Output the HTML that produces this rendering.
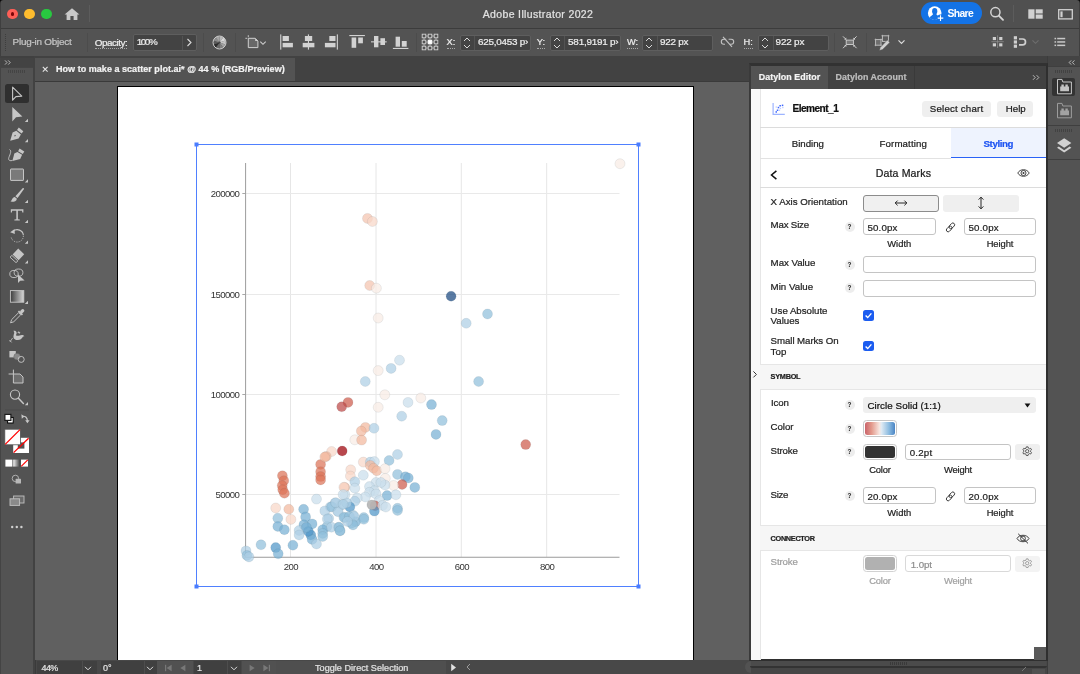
<!DOCTYPE html>
<html>
<head>
<meta charset="utf-8">
<title>Adobe Illustrator 2022</title>
<style>
*{box-sizing:border-box;margin:0;padding:0}
html,body{width:1080px;height:674px;overflow:hidden;background:#606060;font-family:"Liberation Sans",sans-serif;}
.abs{position:absolute}
#app{will-change:transform;position:relative;width:1080px;height:674px;overflow:hidden;background:#606060}
.t{position:absolute;white-space:nowrap;line-height:1;-webkit-text-stroke:0.22px currentColor}
/* title bar */
#titlebar{left:0;top:0;width:1080px;height:28px;background:#505050}
#ctrlbar{left:0;top:28px;width:1080px;height:28px;background:#535353;border-top:1px solid #3c3c3c}
.ui{color:#dcdcdc;font-size:10px}
.field{position:absolute;background:#434343;border:1px solid #5e5e5e;border-radius:2px;height:17px;top:34px}
/* left toolbar */
#toolbar{left:0;top:56px;width:35px;height:618px;background:#535353;border-right:2px solid #424242}
/* tabbar */
#tabbar{left:35px;top:56px;width:1045px;height:26px;background:#424242}
#doctab{left:35px;top:58px;width:260px;height:23px;background:#535353}
/* canvas */
#canvas{left:35px;top:82px;width:1013px;height:578px;background:#606060}
#artboard{left:117px;top:86px;width:577px;height:580px;background:#fff;border:1px solid #000}
#statusbar{left:35px;top:660px;width:1045px;height:14px;background:#484848}
/* right dock */
#dock{left:1047px;top:56px;width:33px;height:618px;background:#535353;border-left:1px solid #3c3c3c}
/* panel */
#panel{left:749px;top:63px;width:299px;height:598px;background:#fff;border:2px solid #2f2f2f;border-top:3px solid #323232;border-left-color:#3a3a3a}
.pl{position:absolute;white-space:nowrap;line-height:1;color:#222;font-size:10.5px}
.inp{position:absolute;background:#fff;border:1px solid #c4c4c4;border-radius:3px;height:16px}
.inp span{position:absolute;left:4px;top:2px;font-size:10.5px;color:#222;line-height:1}
.q{position:absolute;width:10px;height:10px;border-radius:50%;background:#ededed;color:#222;font-size:6.5px;font-weight:bold;text-align:center;line-height:10px}
.sub{position:absolute;white-space:nowrap;line-height:1;color:#222;font-size:10px;transform:translateX(-50%)}
.cb{width:10.6px;height:10.6px;border-radius:2.5px;background:#1b5cf0}
</style>
</head>
<body>
<div id="app">
<div id="canvas" class="abs"></div>
<div id="artboard" class="abs"></div>
<svg class="abs" style="left:190px;top:140px" width="460" height="455" viewBox="190 140 460 455">
<g stroke="#e9e9e9" stroke-width="1">
<line x1="290.5" y1="163" x2="290.5" y2="557" stroke="#e6e6e6"/>
<line x1="376.0" y1="163" x2="376.0" y2="557" stroke="#e6e6e6"/>
<line x1="461.3" y1="163" x2="461.3" y2="557" stroke="#e6e6e6"/>
<line x1="546.7" y1="163" x2="546.7" y2="557" stroke="#e6e6e6"/>
<line x1="246" y1="193.5" x2="619.5" y2="193.5" />
<line x1="246" y1="294.5" x2="619.5" y2="294.5" />
<line x1="246" y1="394.5" x2="619.5" y2="394.5" />
<line x1="246" y1="494.5" x2="619.5" y2="494.5" />
</g>
<g stroke="#a8a8a8" stroke-width="1">
<line x1="242.3" y1="193.5" x2="245.5" y2="193.5" />
<line x1="242.3" y1="294.5" x2="245.5" y2="294.5" />
<line x1="242.3" y1="394.5" x2="245.5" y2="394.5" />
<line x1="242.3" y1="494.5" x2="245.5" y2="494.5" />
<line x1="245.6" y1="163" x2="245.6" y2="557.5" stroke="#9c9c9c"/><line x1="245" y1="557.25" x2="619.5" y2="557.25" stroke="#9a9a9a"/>
</g>
<g font-family="Liberation Sans, sans-serif" font-size="9.6" fill="#333" letter-spacing="-0.57">
<text x="239.4" y="196.8" text-anchor="end">200000</text>
<text x="239.4" y="297.8" text-anchor="end">150000</text>
<text x="239.4" y="397.8" text-anchor="end">100000</text>
<text x="239.4" y="497.8" text-anchor="end">50000</text>
<text x="291.0" y="570.1" text-anchor="middle">200</text>
<text x="376.5" y="570.1" text-anchor="middle">400</text>
<text x="461.8" y="570.1" text-anchor="middle">600</text>
<text x="547.2" y="570.1" text-anchor="middle">800</text>
</g>
<g transform="translate(0.4,0.4)" stroke="#3a4a5a" stroke-opacity="0.18" stroke-width="0.5" fill-opacity="0.72">
<circle cx="619.6" cy="163.3" r="5" fill="#f8ece5"/>
<circle cx="367.1" cy="218.0" r="5" fill="#f4c3ae"/>
<circle cx="372.0" cy="221.1" r="5" fill="#f8d7c7"/>
<circle cx="369.3" cy="285.1" r="5" fill="#f4c3ae"/>
<circle cx="376.0" cy="287.8" r="5" fill="#f8ece5"/>
<circle cx="377.8" cy="317.6" r="5" fill="#f8ece5"/>
<circle cx="450.7" cy="295.8" r="5" fill="#1b487f"/>
<circle cx="465.8" cy="322.9" r="5" fill="#adcee5"/>
<circle cx="487.1" cy="313.6" r="5" fill="#90bfdb"/>
<circle cx="399.1" cy="359.8" r="5" fill="#c9deec"/>
<circle cx="390.7" cy="368.0" r="5" fill="#adcee5"/>
<circle cx="377.8" cy="370.2" r="5" fill="#f8ece5"/>
<circle cx="364.9" cy="381.1" r="5" fill="#adcee5"/>
<circle cx="478.2" cy="381.1" r="5" fill="#90bfdb"/>
<circle cx="384.4" cy="394.4" r="5" fill="#f8ece5"/>
<circle cx="420.4" cy="397.6" r="5" fill="#f8ece5"/>
<circle cx="407.6" cy="402.0" r="5" fill="#c9deec"/>
<circle cx="431.1" cy="404.2" r="5" fill="#77b0d4"/>
<circle cx="347.6" cy="402.0" r="5" fill="#cd5c4c"/>
<circle cx="341.3" cy="406.4" r="5" fill="#bc4846"/>
<circle cx="377.8" cy="406.9" r="5" fill="#f8ece5"/>
<circle cx="401.3" cy="415.8" r="5" fill="#adcee5"/>
<circle cx="441.8" cy="420.2" r="5" fill="#90bfdb"/>
<circle cx="435.6" cy="434.0" r="5" fill="#77b0d4"/>
<circle cx="525.3" cy="444.2" r="5" fill="#cd5c4c"/>
<circle cx="365.0" cy="427.0" r="5" fill="#f2b89e"/>
<circle cx="373.6" cy="427.9" r="5" fill="#adcee5"/>
<circle cx="360.9" cy="430.7" r="5" fill="#f2b89e"/>
<circle cx="354.4" cy="439.4" r="5" fill="#f8ece5"/>
<circle cx="361.2" cy="439.7" r="5" fill="#f2b89e"/>
<circle cx="341.8" cy="450.6" r="5" fill="#9c0009"/>
<circle cx="331.2" cy="451.1" r="5" fill="#f8d7c7"/>
<circle cx="325.8" cy="456.0" r="5" fill="#f2b89e"/>
<circle cx="397.1" cy="454.1" r="5" fill="#adcee5"/>
<circle cx="388.7" cy="460.1" r="5" fill="#90bfdb"/>
<circle cx="362.9" cy="461.7" r="5" fill="#f8d7c7"/>
<circle cx="369.9" cy="461.7" r="5" fill="#adcee5"/>
<circle cx="374.0" cy="461.2" r="5" fill="#c9deec"/>
<circle cx="369.9" cy="465.0" r="5" fill="#f2b89e"/>
<circle cx="373.1" cy="467.8" r="5" fill="#f2b89e"/>
<circle cx="376.4" cy="470.4" r="5" fill="#f2b89e"/>
<circle cx="384.6" cy="468.3" r="5" fill="#f8ece5"/>
<circle cx="350.3" cy="469.4" r="5" fill="#f8d7c7"/>
<circle cx="350.0" cy="475.6" r="5" fill="#f8d7c7"/>
<circle cx="362.9" cy="474.8" r="5" fill="#c9deec"/>
<circle cx="397.1" cy="474.0" r="5" fill="#90bfdb"/>
<circle cx="405.0" cy="476.4" r="5" fill="#77b0d4"/>
<circle cx="407.9" cy="477.6" r="5" fill="#77b0d4"/>
<circle cx="414.4" cy="487.0" r="5" fill="#77b0d4"/>
<circle cx="401.7" cy="484.1" r="5" fill="#cd5c4c"/>
<circle cx="393.2" cy="485.1" r="5" fill="#f8ece5"/>
<circle cx="384.9" cy="478.0" r="5" fill="#f8ece5"/>
<circle cx="384.6" cy="484.6" r="5" fill="#c9deec"/>
<circle cx="344.3" cy="487.0" r="5" fill="#f2b89e"/>
<circle cx="354.4" cy="481.3" r="5" fill="#adcee5"/>
<circle cx="354.4" cy="487.8" r="5" fill="#c9deec"/>
<circle cx="344.6" cy="494.4" r="5" fill="#c9deec"/>
<circle cx="375.6" cy="482.1" r="5" fill="#c9deec"/>
<circle cx="380.5" cy="482.1" r="5" fill="#c9deec"/>
<circle cx="369.1" cy="486.2" r="5" fill="#c9deec"/>
<circle cx="374.0" cy="490.3" r="5" fill="#c9deec"/>
<circle cx="369.1" cy="491.9" r="5" fill="#c9deec"/>
<circle cx="375.6" cy="493.5" r="5" fill="#c9deec"/>
<circle cx="365.0" cy="496.5" r="5" fill="#c9deec"/>
<circle cx="386.7" cy="495.2" r="5" fill="#77b0d4"/>
<circle cx="395.5" cy="494.4" r="5" fill="#c9deec"/>
<circle cx="378.9" cy="500.1" r="5" fill="#c9deec"/>
<circle cx="356.8" cy="497.6" r="5" fill="#c9deec"/>
<circle cx="354.4" cy="500.9" r="5" fill="#adcee5"/>
<circle cx="374.6" cy="505.4" r="5" fill="#cd5c4c"/>
<circle cx="374.0" cy="510.7" r="5" fill="#4f95c7"/>
<circle cx="382.1" cy="505.0" r="5" fill="#c9deec"/>
<circle cx="385.4" cy="506.6" r="5" fill="#c9deec"/>
<circle cx="397.1" cy="507.9" r="5" fill="#90bfdb"/>
<circle cx="397.1" cy="510.0" r="5" fill="#90bfdb"/>
<circle cx="349.5" cy="506.6" r="5" fill="#4f95c7"/>
<circle cx="334.8" cy="502.5" r="5" fill="#adcee5"/>
<circle cx="341.3" cy="504.2" r="5" fill="#adcee5"/>
<circle cx="329.9" cy="506.6" r="5" fill="#adcee5"/>
<circle cx="346.2" cy="502.5" r="5" fill="#adcee5"/>
<circle cx="337.2" cy="510.7" r="5" fill="#c9deec"/>
<circle cx="344.6" cy="517.2" r="5" fill="#90bfdb"/>
<circle cx="352.7" cy="514.8" r="5" fill="#adcee5"/>
<circle cx="363.4" cy="517.2" r="5" fill="#90bfdb"/>
<circle cx="355.2" cy="521.3" r="5" fill="#77b0d4"/>
<circle cx="351.1" cy="522.9" r="5" fill="#90bfdb"/>
<circle cx="338.1" cy="527.0" r="5" fill="#90bfdb"/>
<circle cx="328.3" cy="518.0" r="5" fill="#adcee5"/>
<circle cx="326.6" cy="526.2" r="5" fill="#90bfdb"/>
<circle cx="339.7" cy="530.3" r="5" fill="#90bfdb"/>
<circle cx="320.2" cy="464.0" r="5" fill="#dc7357"/>
<circle cx="320.2" cy="471.3" r="5" fill="#dc7357"/>
<circle cx="320.2" cy="476.2" r="5" fill="#dc7357"/>
<circle cx="320.2" cy="479.5" r="5" fill="#dc7357"/>
<circle cx="324.4" cy="456.6" r="5" fill="#f2b89e"/>
<circle cx="343.5" cy="486.8" r="5" fill="#f8d7c7"/>
<circle cx="282.0" cy="475.4" r="5" fill="#dc7357"/>
<circle cx="283.4" cy="480.3" r="5" fill="#dc7357"/>
<circle cx="281.8" cy="485.2" r="5" fill="#dc7357"/>
<circle cx="282.3" cy="489.3" r="5" fill="#dc7357"/>
<circle cx="284.0" cy="492.9" r="5" fill="#dc7357"/>
<circle cx="245.6" cy="550.5" r="5" fill="#adcee5"/>
<circle cx="246.5" cy="555.0" r="5" fill="#90bfdb"/>
<circle cx="248.5" cy="556.5" r="5" fill="#adcee5"/>
<circle cx="260.6" cy="544.4" r="5" fill="#90bfdb"/>
<circle cx="275.3" cy="547.2" r="5" fill="#4f95c7"/>
<circle cx="277.8" cy="553.4" r="5" fill="#77b0d4"/>
<circle cx="292.5" cy="544.8" r="5" fill="#77b0d4"/>
<circle cx="277.4" cy="517.8" r="5" fill="#90bfdb"/>
<circle cx="277.4" cy="526.0" r="5" fill="#77b0d4"/>
<circle cx="284.0" cy="529.3" r="5" fill="#77b0d4"/>
<circle cx="275.3" cy="507.6" r="5" fill="#f8d7c7"/>
<circle cx="288.4" cy="508.9" r="5" fill="#f2b89e"/>
<circle cx="290.5" cy="519.0" r="5" fill="#f8d7c7"/>
<circle cx="303.2" cy="508.9" r="5" fill="#77b0d4"/>
<circle cx="305.2" cy="516.5" r="5" fill="#77b0d4"/>
<circle cx="303.5" cy="524.4" r="5" fill="#77b0d4"/>
<circle cx="311.7" cy="523.5" r="5" fill="#77b0d4"/>
<circle cx="298.7" cy="530.1" r="5" fill="#adcee5"/>
<circle cx="298.7" cy="534.6" r="5" fill="#adcee5"/>
<circle cx="310.4" cy="534.6" r="5" fill="#4f95c7"/>
<circle cx="311.7" cy="539.0" r="5" fill="#77b0d4"/>
<circle cx="316.1" cy="543.6" r="5" fill="#adcee5"/>
<circle cx="322.3" cy="529.3" r="5" fill="#77b0d4"/>
<circle cx="322.3" cy="533.0" r="5" fill="#90bfdb"/>
<circle cx="322.3" cy="536.1" r="5" fill="#90bfdb"/>
<circle cx="316.1" cy="498.7" r="5" fill="#c9deec"/>
<circle cx="324.4" cy="510.5" r="5" fill="#adcee5"/>
<circle cx="326.9" cy="518.7" r="5" fill="#adcee5"/>
<circle cx="331.3" cy="506.4" r="5" fill="#90bfdb"/>
<circle cx="331.0" cy="526.8" r="5" fill="#adcee5"/>
<circle cx="337.8" cy="511.3" r="5" fill="#adcee5"/>
<circle cx="338.6" cy="526.8" r="5" fill="#90bfdb"/>
<circle cx="339.5" cy="530.4" r="5" fill="#90bfdb"/>
<circle cx="335.4" cy="502.3" r="5" fill="#adcee5"/>
<circle cx="342.7" cy="504.0" r="5" fill="#adcee5"/>
<circle cx="342.7" cy="494.2" r="5" fill="#c9deec"/>
<circle cx="343.5" cy="517.0" r="5" fill="#90bfdb"/>
<circle cx="308.0" cy="531.0" r="5" fill="#4f95c7"/>
<circle cx="306.0" cy="527.0" r="5" fill="#77b0d4"/>
<circle cx="349.0" cy="516.1" r="5" fill="#90bfdb"/>
<circle cx="353.8" cy="516.1" r="5" fill="#adcee5"/>
<circle cx="352.6" cy="524.5" r="5" fill="#90bfdb"/>
<circle cx="363.4" cy="518.9" r="5" fill="#90bfdb"/>
<circle cx="347.0" cy="521.0" r="5" fill="#adcee5"/>
<circle cx="371.4" cy="504.4" r="4.9" fill="#b6b6b6" fill-opacity="0.93"/>
</g>
<rect x="196.5" y="144.5" width="442" height="442" fill="none" stroke="#4f80ff" stroke-width="1"/>
<rect x="194.5" y="142.5" width="4" height="4" fill="#4a7dff"/>
<rect x="636.5" y="142.5" width="4" height="4" fill="#4a7dff"/>
<rect x="194.5" y="584.5" width="4" height="4" fill="#4a7dff"/>
<rect x="636.5" y="584.5" width="4" height="4" fill="#4a7dff"/>
</svg>

<div id="titlebar" class="abs"></div>
<div id="ctrlbar" class="abs"></div>
<!-- traffic lights -->
<div class="abs" style="left:7.3px;top:8.7px;width:10.6px;height:10.6px;border-radius:50%;background:#fe5f57"></div>
<div class="abs" style="left:10.7px;top:12.1px;width:3.8px;height:3.8px;border-radius:50%;background:#7e0508"></div>
<div class="abs" style="left:24.3px;top:8.7px;width:10.6px;height:10.6px;border-radius:50%;background:#febc2e"></div>
<div class="abs" style="left:41px;top:8.7px;width:10.6px;height:10.6px;border-radius:50%;background:#28c840"></div>
<svg class="abs" style="left:64px;top:8px" width="16" height="13" viewBox="0 0 16 13"><path d="M8 0.3 L15.4 6.6 L13.4 6.6 L13.4 12 L9.6 12 L9.6 8 L6.4 8 L6.4 12 L2.6 12 L2.6 6.6 L0.6 6.6 Z" fill="#c9c9c9"/></svg>
<div class="abs" style="left:89px;top:5px;width:1px;height:17px;background:#5c5c5c"></div>
<div class="t" style="left:482.70px;top:8.91px;font-size:10.50px;color:#e2e2e2;letter-spacing:0.356px;">Adobe Illustrator 2022</div>
<!-- share -->
<div class="abs" style="left:920.5px;top:2.2px;width:61px;height:22.2px;border-radius:11.1px;background:#1473e6"></div>
<svg class="abs" style="left:927px;top:5px" width="18" height="18" viewBox="0 0 18 18"><circle cx="7.7" cy="8" r="6.8" fill="#fff"/><ellipse cx="7.7" cy="6.2" rx="2.6" ry="3.3" fill="#1473e6"/><path d="M6.3 8.6 C6.3 10.4 3.4 10.6 2.9 12.8 C5.3 15.6 10.1 15.6 12.5 12.8 C12 10.6 9.1 10.4 9.1 8.6 Z" fill="#1473e6"/><circle cx="13.5" cy="13.1" r="3.5" fill="#1473e6"/><path d="M13.5 10.3v5.6M10.7 13.1h5.6" stroke="#fff" stroke-width="1.1"/></svg>
<div class="t" style="left:947.50px;top:9.40px;font-size:10.40px;color:#fff;letter-spacing:-0.650px;font-weight:bold;-webkit-text-stroke:0;">Share</div>
<svg class="abs" style="left:989px;top:6px" width="16" height="16" viewBox="0 0 16 16"><circle cx="6.4" cy="6.2" r="4.6" fill="none" stroke="#d4d4d4" stroke-width="1.5"/><path d="M9.8 9.6 L14 13.8" stroke="#d4d4d4" stroke-width="1.9" stroke-linecap="round"/></svg>
<div class="abs" style="left:1013px;top:5px;width:1px;height:17px;background:#5c5c5c"></div>
<svg class="abs" style="left:1028px;top:8.5px" width="15" height="10" viewBox="0 0 15 10"><rect x="0.3" y="0.3" width="6.2" height="9.4" fill="#d0d0d0"/><rect x="7.7" y="0.3" width="7" height="4.2" fill="#d0d0d0"/><rect x="7.7" y="5.5" width="7" height="4.2" fill="#d0d0d0"/></svg>
<svg class="abs" style="left:1057.5px;top:8.5px" width="15" height="11" viewBox="0 0 15 11"><rect x="0.7" y="0.7" width="13.6" height="9.2" fill="none" stroke="#d0d0d0" stroke-width="1.3"/><rect x="2.4" y="2.4" width="2.2" height="5.8" fill="#d0d0d0"/></svg>
<!-- control bar -->
<div class="abs" style="left:5px;top:34px;width:1px;height:17px;background:repeating-linear-gradient(#3e3e3e 0 1px,transparent 1px 2px)"></div>
<div class="t" style="left:12.60px;top:37.32px;font-size:9.90px;color:#c6c6c6;letter-spacing:-0.222px;">Plug-in Object</div>
<div class="abs" style="left:87px;top:33px;width:1px;height:19px;background:#4c4c4c"></div>
<div class="t" style="left:94.80px;top:37.62px;font-size:9.90px;color:#ededed;letter-spacing:-0.473px;border-bottom:1px dotted #a8a8a8;padding-bottom:0.3px;">Opacity:</div>
<div class="field" style="left:132.7px;width:64.6px;top:34.4px;height:16.6px"></div>
<div class="abs" style="left:182px;top:36px;width:1px;height:14px;background:#535353"></div>
<div class="t" style="left:136.70px;top:37.32px;font-size:9.90px;color:#ededed;letter-spacing:-1.408px;">100%</div>
<svg class="abs" style="left:186px;top:38px" width="7" height="9" viewBox="0 0 7 9"><path d="M1.5 1 L5 4.5 L1.5 8" fill="none" stroke="#d8d8d8" stroke-width="1.1"/></svg>
<div class="abs" style="left:203px;top:33px;width:1px;height:19px;background:#4c4c4c"></div>
<!-- recolor -->
<svg class="abs" style="left:212px;top:34.7px" width="15" height="15" viewBox="0 0 15 15"><path d="M7.50 7.50 L7.50 1.30 A6.2 6.2 0 0 1 11.14 2.48 Z" fill="#b8b8b8"/><path d="M7.50 7.50 L11.14 2.48 A6.2 6.2 0 0 1 13.40 5.58 Z" fill="#d8d8d8"/><path d="M7.50 7.50 L13.40 5.58 A6.2 6.2 0 0 1 13.40 9.42 Z" fill="#c4c4c4"/><path d="M7.50 7.50 L13.40 9.42 A6.2 6.2 0 0 1 11.14 12.52 Z" fill="#a0a0a0"/><path d="M7.50 7.50 L11.14 12.52 A6.2 6.2 0 0 1 7.50 13.70 Z" fill="#808080"/><path d="M7.50 7.50 L7.50 13.70 A6.2 6.2 0 0 1 3.86 12.52 Z" fill="#6a6a6a"/><path d="M7.50 7.50 L3.86 12.52 A6.2 6.2 0 0 1 1.60 9.42 Z" fill="#2c2c2c"/><path d="M7.50 7.50 L1.60 9.42 A6.2 6.2 0 0 1 1.60 5.58 Z" fill="#5a5a5a"/><path d="M7.50 7.50 L1.60 5.58 A6.2 6.2 0 0 1 3.86 2.48 Z" fill="#8c8c8c"/><path d="M7.50 7.50 L3.86 2.48 A6.2 6.2 0 0 1 7.50 1.30 Z" fill="#a6a6a6"/><circle cx="7.5" cy="7.5" r="6.5" fill="none" stroke="#cacaca" stroke-width="1"/><circle cx="7.5" cy="7.5" r="1.1" fill="#444"/></svg>
<div class="abs" style="left:235px;top:33px;width:1px;height:19px;background:#4c4c4c"></div>
<!-- doc setup -->
<svg class="abs" style="left:244px;top:33px" width="24" height="17" viewBox="244 33 24 17"><path d="M248.3 38.3 H255.2 L257.9 41 V47.6 H248.3 Z" fill="#686868" stroke="#d0d0d0" stroke-width="1"/><path d="M255.2 38.3 L257.9 41 H255.2 Z" fill="#d0d0d0"/><path d="M248.3 35.2V37.2M245.4 38.3H247.2" stroke="#d0d0d0" stroke-width="0.9"/><path d="M260.3 41.6 L263 44.3 L265.7 41.6" fill="none" stroke="#cfcfcf" stroke-width="1.1"/></svg>
<!-- align icons -->
<svg class="abs" style="left:278px;top:33px" width="132" height="18" viewBox="278 33 132 18">
<g fill="#d2d2d2">
<rect x="280.2" y="34.4" width="1.1" height="15.2"/><rect x="282.6" y="36" width="6.3" height="5"/><rect x="282.6" y="42.9" width="10.3" height="4.4"/>
<rect x="307.9" y="34.4" width="1.1" height="15.2"/><rect x="304.9" y="36" width="7.3" height="5"/><rect x="302.7" y="42.9" width="11.7" height="4.4"/>
<rect x="336.8" y="34.4" width="1.1" height="15.2"/><rect x="329.3" y="36" width="6.2" height="5"/><rect x="324.9" y="42.9" width="10.6" height="4.4"/>
<rect x="349.3" y="35" width="15.6" height="1.1"/><rect x="351.6" y="37.5" width="4.6" height="10.3"/><rect x="358.2" y="37.5" width="4.7" height="5.8"/>
<rect x="371" y="41.3" width="15.7" height="1.1"/><rect x="374" y="36" width="4.4" height="11.3"/><rect x="380.4" y="38.2" width="4.6" height="6.8"/>
<rect x="392.9" y="47.9" width="15.5" height="1.1"/><rect x="395.6" y="36.7" width="4.4" height="10"/><rect x="401.8" y="41" width="4.9" height="5.7"/>
</g></svg>
<div class="abs" style="left:416px;top:33px;width:1px;height:19px;background:#4c4c4c"></div>
<!-- reference point -->
<svg class="abs" style="left:421px;top:33px" width="18" height="18" viewBox="0 0 18 18"><g fill="none" stroke="#d2d2d2" stroke-width="0.9"><path d="M3 3H15V15H3Z M3 9H15 M9 3V15" stroke-width="0.7"/><g fill="#535353"><rect x="1.2" y="1.2" width="3.6" height="3.6"/><rect x="7.2" y="1.2" width="3.6" height="3.6"/><rect x="13.2" y="1.2" width="3.6" height="3.6"/><rect x="1.2" y="7.2" width="3.6" height="3.6"/><rect x="13.2" y="7.2" width="3.6" height="3.6"/><rect x="1.2" y="13.2" width="3.6" height="3.6"/><rect x="7.2" y="13.2" width="3.6" height="3.6"/><rect x="13.2" y="13.2" width="3.6" height="3.6"/></g><rect x="7.2" y="7.2" width="3.6" height="3.6" fill="#fff" stroke="#fff"/></g></svg>
<!-- X Y W H -->
<div class="t" style="left:446.50px;top:38.33px;font-size:9.30px;color:#ededed;border-bottom:1px dotted #a8a8a8;padding-bottom:0.3px;">X:</div>
<div class="field" style="left:459.5px;width:71px;top:34.5px;height:16.5px"></div>
<div class="abs" style="left:474px;top:35.5px;width:1px;height:14.5px;background:#535353"></div>
<svg class="abs sp" style="left:463px;top:36px" width="8" height="14" viewBox="0 0 8 14"><path d="M1 5 L4 2 L7 5 M1 9 L4 12 L7 9" fill="none" stroke="#d8d8d8" stroke-width="1"/></svg>
<div class="t" style="left:478.00px;top:37.02px;font-size:9.90px;color:#ededed;letter-spacing:-0.235px;">625,0453 p&#8250;</div>
<div class="t" style="left:536.70px;top:38.33px;font-size:9.30px;color:#ededed;border-bottom:1px dotted #a8a8a8;padding-bottom:0.3px;">Y:</div>
<div class="field" style="left:549.5px;width:71px;top:34.5px;height:16.5px"></div>
<div class="abs" style="left:564px;top:35.5px;width:1px;height:14.5px;background:#535353"></div>
<svg class="abs sp" style="left:553px;top:36px" width="8" height="14" viewBox="0 0 8 14"><path d="M1 5 L4 2 L7 5 M1 9 L4 12 L7 9" fill="none" stroke="#d8d8d8" stroke-width="1"/></svg>
<div class="t" style="left:568.10px;top:37.02px;font-size:9.90px;color:#ededed;letter-spacing:-0.225px;">581,9191 p&#8250;</div>
<div class="t" style="left:627.00px;top:38.33px;font-size:9.30px;color:#ededed;border-bottom:1px dotted #a8a8a8;padding-bottom:0.3px;">W:</div>
<div class="field" style="left:641.5px;width:71px;top:34.5px;height:16.5px"></div>
<div class="abs" style="left:656.5px;top:35.5px;width:1px;height:14.5px;background:#535353"></div>
<svg class="abs sp" style="left:645px;top:36px" width="8" height="14" viewBox="0 0 8 14"><path d="M1 5 L4 2 L7 5 M1 9 L4 12 L7 9" fill="none" stroke="#d8d8d8" stroke-width="1"/></svg>
<div class="t" style="left:660.00px;top:37.02px;font-size:9.90px;color:#ededed;letter-spacing:-0.264px;">922 px</div>
<svg class="abs" style="left:720px;top:35px" width="15" height="14" viewBox="0 0 15 14"><g fill="none" stroke="#c4c4c4" stroke-width="1.1"><path d="M6.2 4.3 H3.8 A2.5 2.5 0 0 0 3.8 9.3 H5"/><path d="M8.6 4.3 H11.2 A2.5 2.5 0 0 1 11.2 9.3 H9.8"/><path d="M3 1.8 L12 11.8"/></g></svg>
<div class="t" style="left:743.60px;top:38.33px;font-size:9.30px;color:#ededed;border-bottom:1px dotted #a8a8a8;padding-bottom:0.3px;">H:</div>
<div class="field" style="left:757.5px;width:71px;top:34.5px;height:16.5px"></div>
<div class="abs" style="left:772.5px;top:35.5px;width:1px;height:14.5px;background:#535353"></div>
<svg class="abs sp" style="left:761px;top:36px" width="8" height="14" viewBox="0 0 8 14"><path d="M1 5 L4 2 L7 5 M1 9 L4 12 L7 9" fill="none" stroke="#d8d8d8" stroke-width="1"/></svg>
<div class="t" style="left:775.60px;top:37.02px;font-size:9.90px;color:#ededed;letter-spacing:-0.184px;">922 px</div>
<div class="abs" style="left:833.5px;top:33px;width:1px;height:19px;background:#4c4c4c"></div>
<svg class="abs" style="left:842px;top:35px" width="16" height="14" viewBox="842 35 16 14"><rect x="846.2" y="40.1" width="7.2" height="4.4" fill="#7a7a7a" stroke="#d2d2d2" stroke-width="0.9"/><g stroke="#d2d2d2" stroke-width="1" fill="#d2d2d2"><path d="M843 36.4 L845.6 39" fill="none"/><path d="M846.3 37.6 V39.7 H844.2 Z" stroke="none"/><path d="M856.6 36.4 L854 39" fill="none"/><path d="M853.3 37.6 V39.7 H855.4 Z" stroke="none"/><path d="M843 48.2 L845.6 45.6" fill="none"/><path d="M846.3 47 V44.9 H844.2 Z" stroke="none"/><path d="M856.6 48.2 L854 45.6" fill="none"/><path d="M853.3 47 V44.9 H855.4 Z" stroke="none"/></g></svg>
<div class="abs" style="left:866px;top:33px;width:1px;height:19px;background:#4c4c4c"></div>
<svg class="abs" style="left:873px;top:33px" width="19" height="19" viewBox="873 33 19 19"><g fill="none" stroke="#c4c4c4" stroke-width="0.9"><rect x="882.4" y="35.8" width="6" height="5.6" fill="#5c5c5c"/><rect x="875.6" y="39.6" width="5.4" height="5.6" fill="#6e6e6e"/><path d="M874.6 39.6h1M875.6 38.6v1M881 45.2h1M881 45.2v1M881 39.6h1M881 38.6v1M875.6 45.2v1M874.6 45.2h1M882.4 35.8h-1M882.4 34.8v1M888.4 35.8h1M888.4 34.8v1" stroke-width="0.7"/></g><path d="M887.4 40 L889.8 42.4 L882.6 49.6 L879.4 50.6 L880.2 47.4 Z" fill="#d0d0d0" stroke="#535353" stroke-width="0.5"/></svg>
<svg class="abs" style="left:897px;top:38px" width="9" height="8" viewBox="0 0 9 8"><path d="M1.5 2.3 L4.5 5.3 L7.5 2.3" fill="none" stroke="#dcdcdc" stroke-width="1.2"/></svg>
<svg class="abs" style="left:990px;top:34px" width="16" height="16" viewBox="990 34 16 16"><path d="M997.6 35.4V48M991.4 41.7H1003.8" stroke="#8c8c8c" stroke-width="0.8"/><g fill="#d0d0d0"><rect x="992.8" y="37" width="3.2" height="3.1"/><rect x="999.2" y="37" width="3.2" height="3.1"/><rect x="992.8" y="43.3" width="3.2" height="3.1"/><rect x="999.2" y="43.3" width="3.2" height="3.1"/></g></svg>
<svg class="abs" style="left:1013px;top:35px" width="15" height="14" viewBox="0 0 15 14"><g fill="#cfcfcf"><rect x="0.8" y="1.2" width="3.2" height="3.2"/><rect x="0.8" y="5.4" width="3.2" height="3.2"/><rect x="0.8" y="9.6" width="3.2" height="3.2"/></g><path d="M6 4 H9.6 A2.9 2.9 0 0 1 9.6 9.8 H6" fill="none" stroke="#cfcfcf" stroke-width="1.7"/></svg>
<svg class="abs" style="left:1031px;top:38px" width="9" height="8" viewBox="0 0 9 8"><path d="M1.5 2.3 L4.5 5.3 L7.5 2.3" fill="none" stroke="#6e6e6e" stroke-width="1.1"/></svg>
<svg class="abs" style="left:1054px;top:36px" width="12" height="12" viewBox="0 0 12 12"><g fill="#c8c8c8"><rect x="0.5" y="1.8" width="1.6" height="1.5"/><rect x="3.2" y="1.8" width="8" height="1.5"/><rect x="0.5" y="5.2" width="1.6" height="1.5"/><rect x="3.2" y="5.2" width="8" height="1.5"/><rect x="0.5" y="8.6" width="1.6" height="1.5"/><rect x="3.2" y="8.6" width="8" height="1.5"/></g></svg>
<div class="abs" style="left:0;top:0;width:1px;height:57px;background:#3f3f3f"></div>
<div class="abs" style="left:1079px;top:0;width:1px;height:674px;background:#3f3f3f"></div>
<svg class="abs" style="left:0;top:0" width="4" height="4" viewBox="0 0 4 4"><path d="M0 0 H3.5 A3.5 3.5 0 0 0 0 3.5 Z" fill="#0a0a0a"/></svg>
<svg class="abs" style="left:1076px;top:0" width="4" height="4" viewBox="0 0 4 4"><path d="M4 0 H0.5 A3.5 3.5 0 0 1 4 3.5 Z" fill="#0a0a0a"/></svg>

<div id="tabbar" class="abs"></div>
<div id="doctab" class="abs"></div>
<div class="abs" style="left:35px;top:81px;width:716px;height:1px;background:#3a3a3a"></div>
<svg class="abs" style="left:40.5px;top:64.5px" width="9" height="9" viewBox="0 0 9 9"><path d="M1.8 1.9 L6.6 6.7 M6.6 1.9 L1.8 6.7" stroke="#e6e6e6" stroke-width="1.1"/></svg>
<div class="t" style="left:56.00px;top:64.58px;font-size:9.00px;color:#f2f2f2;letter-spacing:0.037px;font-weight:bold;">How to make a scatter plot.ai* @ 44 % (RGB/Preview)</div>

<div id="toolbar" class="abs"></div>
<div class="abs" style="left:0;top:57px;width:1px;height:617px;background:#444"></div>
<div class="abs" style="left:0;top:56px;width:34px;height:2px;background:#404040"></div>
<div class="abs" style="left:1px;top:58px;width:32px;height:8.5px;background:#434343"></div>
<svg class="abs" style="left:4px;top:59px" width="9" height="7" viewBox="0 0 9 7"><path d="M1 1.4 L3 3.5 L1 5.6 M4.2 1.4 L6.2 3.5 L4.2 5.6" fill="none" stroke="#c4c4c4" stroke-width="0.9"/></svg>
<div class="abs" style="left:1px;top:67px;width:32px;height:1px;background:#454545"></div>
<div class="abs" style="left:8px;top:70px;width:17px;height:3px;background:repeating-linear-gradient(90deg,#444 0 1px,transparent 1px 2px)"></div>
<div class="abs" style="left:5px;top:84px;width:24px;height:19px;border-radius:2.5px;background:#2f2f2f"></div>
<svg class="abs" style="left:0;top:80px" width="34" height="460" viewBox="0 80 34 460">
<g fill="#c6c6c6" stroke="none">
<!-- selection (outline) -->
<path d="M12.6 87.2 L12.6 100.2 L15.9 96.6 L21.8 96.1 Z" fill="none" stroke="#c6c6c6" stroke-width="1.1" stroke-linejoin="round"/>
<!-- direct selection -->
<path d="M12.3 107 L12.3 121.4 L16 117.2 L22.4 116.6 Z"/>
<!-- pen -->
<path d="M18.8 127.6 L23.3 131.2 L21.6 133.6 L17 130 Z"/>
<path d="M16.3 130.8 L20.9 134.4 L18.6 138.6 L10.2 140.7 L14.2 136 L15 136.6 L15.9 135.4 L15 134.7 L14.2 136 L10.2 140.7 L12.6 132.6 Z"/>
<!-- curvature -->
<path d="M19.6 148.6 L24.3 151.4 L22.8 154 L18.1 151.2 Z"/>
<path d="M17.4 152 L22.1 154.8 L20.2 159 L12.4 161 L14.3 153.4 Z"/>
<path d="M9.5 149.5 C12.5 151 9 156 8.6 158.5 C8.4 160.5 10.5 161.2 12.4 160.4" fill="none" stroke="#c6c6c6" stroke-width="0.9"/>
<!-- rectangle -->
<rect x="10.5" y="169" width="13" height="11.4" fill="#7a7a7a" stroke="#c6c6c6" stroke-width="1" rx="0.5"/>
<!-- brush -->
<path d="M22.6 188.2 C23.6 187.6 24.3 188.4 23.8 189.2 L17.6 198 L15.4 196.3 Z"/>
<path d="M14.8 197 L16.9 198.7 C16.6 201.6 13 202 10.2 201.6 C12.3 200.6 12 197.4 14.8 197Z"/>
<!-- type -->
<path d="M10.8 209.2 H23.4 V212.4 H22.3 L22 210.7 H17.9 V219.3 L19.8 219.6 V220.6 H14.4 V219.6 L16.3 219.3 V210.7 H12.2 L11.9 212.4 H10.8 Z"/>
<!-- rotate -->
<path d="M13.2 231.2 A6.2 6.2 0 0 1 23.4 235.2" fill="none" stroke="#c6c6c6" stroke-width="1.1"/>
<path d="M10.2 232.2 L14.6 229 L14.8 234 Z"/>
<path d="M23.4 236 A6.2 6.2 0 0 1 11.2 237.4" fill="none" stroke="#c6c6c6" stroke-width="1" stroke-dasharray="1 1.3"/>
<!-- eraser -->
<path d="M18.2 248.6 L24.2 254.2 L18.6 260.2 L12.6 254.6 Z"/>
<path d="M11.9 255.4 L17.9 261 L16 262.6 L10 257.2 Z" fill="none" stroke="#c6c6c6" stroke-width="0.9"/>
<!-- shape builder -->
<ellipse cx="14" cy="274" rx="4.2" ry="3.6" fill="none" stroke="#c6c6c6" stroke-width="0.9"/>
<ellipse cx="18.5" cy="272.6" rx="4.4" ry="3.6" fill="none" stroke="#c6c6c6" stroke-width="0.9"/>
<path d="M18 274.6 L18 283 L20.2 280.8 L24.6 280.6 Z"/>
</g>
<defs><linearGradient id="tg" x1="0" x2="1" y1="0" y2="0"><stop offset="0" stop-color="#3c3c3c"/><stop offset="1" stop-color="#d8d8d8"/></linearGradient></defs>
<rect x="10.4" y="290.6" width="13.4" height="11.6" fill="url(#tg)" stroke="#c6c6c6" stroke-width="0.9"/>
<g fill="#c6c6c6">
<!-- eyedropper -->
<g transform="rotate(45 16.8 316.6)"><rect x="15.2" y="306.6" width="3.2" height="4.6" rx="1.6"/><rect x="14" y="310.6" width="5.6" height="1.7"/><path d="M15.3 312.6 H18.3 V322.4 L16.8 325.4 L15.3 322.4 Z" fill="none" stroke="#c6c6c6" stroke-width="0.9"/></g>
<!-- symbol sprayer-ish -->
<path d="M13.4 330.8 C16.4 330 17.6 333 15.8 335 C18 337.6 21.8 332.8 24.6 336.4 C22 335.4 22.6 340.6 17.2 340 C14 339.6 13 337.6 13.6 335.4 C14 333.6 15 332.4 13.4 330.8Z"/>
<path d="M12.6 338 L10 341.8 M9.4 340 L11.6 342.4 M18.6 331.4 L19.4 333.8 M17.6 332.6 L20.2 332.4" stroke="#c6c6c6" stroke-width="0.8" fill="none"/>
<!-- shapes group -->
<rect x="9.4" y="351" width="6.4" height="6.4"/>
<circle cx="17" cy="356.6" r="3.2" fill="#8a8a8a" stroke="#6a6a6a" stroke-width="0.5"/>
<circle cx="21.2" cy="359.4" r="3" fill="none" stroke="#c6c6c6" stroke-width="0.9"/>
<!-- artboard -->
<path d="M13.4 374 H20 L23 377 V383 H13.4 Z" fill="#6e6e6e" stroke="#c6c6c6" stroke-width="1"/>
<path d="M8.6 374 H13 M13.4 369.6 V374" stroke="#c6c6c6" stroke-width="1" fill="none"/>
<!-- zoom -->
<circle cx="15" cy="394.6" r="4.6" fill="none" stroke="#c6c6c6" stroke-width="1.1"/>
<path d="M18.4 398.2 L23.4 403.4" stroke="#c6c6c6" stroke-width="1.5" stroke-linecap="round"/>
<!-- corner triangles -->
<path d="M28 118.8 V122.0 H24.8 Z M28 139.1 V142.3 H24.8 Z M28 179.3 V182.5 H24.8 Z M28 199.8 V203.0 H24.8 Z M28 219.8 V223.0 H24.8 Z M28 240.5 V243.7 H24.8 Z M28 260.2 V263.4 H24.8 Z M28 300.8 V304.0 H24.8 Z M28 402.0 V405.2 H24.8 Z"/>
</g>
<!-- separator -->
<rect x="5" y="409.6" width="24" height="0.8" fill="#4a4a4a"/>
<!-- default fill/stroke mini -->
<rect x="7.6" y="417.4" width="5.6" height="5.6" fill="#fff" stroke="#000" stroke-width="1" />
<rect x="4.9" y="414.4" width="6" height="6" fill="#fff" stroke="#1a1a1a" stroke-width="1.2"/>
<path d="M22 416.4 C25.6 415.6 27.4 418 27.4 421" fill="none" stroke="#c6c6c6" stroke-width="1.2"/>
<path d="M21.4 414.2 L24.4 416.4 L21.8 418.8 Z M25.2 420.2 H29.6 L27.4 423.2 Z" fill="#c6c6c6"/>
<!-- stroke box -->
<rect x="13.2" y="437.8" width="15.8" height="15.2" fill="#fff"/>
<rect x="17.8" y="442.4" width="6.6" height="6.2" fill="#555"/>
<path d="M13.6 452.6 L28.6 438.2" stroke="#f00" stroke-width="1.3"/>
<!-- fill box -->
<rect x="4.8" y="429.2" width="15.6" height="15.6" fill="#fff" stroke="#535353" stroke-width="0.8"/>
<path d="M5.2 444.4 L20 429.6" stroke="#f00" stroke-width="1.3"/>
<!-- color/gradient/none -->
<rect x="5.4" y="459.6" width="7" height="7" fill="#fff"/>
<defs><linearGradient id="tg2" x1="0" x2="1"><stop offset="0" stop-color="#f4f4f4"/><stop offset="1" stop-color="#3a3a3a"/></linearGradient></defs>
<rect x="13.2" y="459.6" width="7" height="7" fill="url(#tg2)"/>
<rect x="21" y="459.6" width="7" height="7" fill="#fff"/>
<path d="M21.2 466.4 L27.8 459.8" stroke="#f00" stroke-width="1.2"/>
<!-- draw mode -->
<circle cx="15.4" cy="478.4" r="3.2" fill="none" stroke="#b8b8b8" stroke-width="0.9"/>
<rect x="15.6" y="478.8" width="5.4" height="4.8" fill="#b8b8b8" rx="0.6"/>
<!-- screen mode -->
<rect x="13.6" y="496" width="10.4" height="7" fill="#6a6a6a" stroke="#c0c0c0" stroke-width="0.9"/>
<rect x="10" y="498.8" width="9.6" height="6.6" fill="#8a8a8a" stroke="#c0c0c0" stroke-width="0.9"/>
<!-- dots -->
<circle cx="12.2" cy="527" r="1.2" fill="#d0d0d0"/><circle cx="16.8" cy="527" r="1.2" fill="#d0d0d0"/><circle cx="21.4" cy="527" r="1.2" fill="#d0d0d0"/>
</svg>

<div id="statusbar" class="abs"></div>
<div class="abs" style="left:35px;top:660px;width:1px;height:14px;background:#3a3a3a"></div>
<div class="abs" style="left:37px;top:661px;width:60px;height:13px;background:#404040"></div>
<div class="abs" style="left:82px;top:661px;width:1px;height:13px;background:#4d4d4d"></div>
<div class="abs" style="left:100.5px;top:661px;width:56px;height:13px;background:#404040"></div>
<div class="abs" style="left:143.5px;top:661px;width:1px;height:13px;background:#4d4d4d"></div>
<div class="abs" style="left:194px;top:661px;width:47px;height:13px;background:#404040"></div>
<div class="abs" style="left:227px;top:661px;width:1px;height:13px;background:#4d4d4d"></div>
<div class="abs" style="left:157px;top:661px;width:36px;height:13px;background:#515151"></div>
<div class="abs" style="left:241.5px;top:661px;width:34px;height:13px;background:#515151"></div>
<div class="abs" style="left:276px;top:661px;width:170px;height:13px;background:#4f4f4f"></div>
<div class="t" style="left:41.60px;top:663.98px;font-size:9.00px;color:#e4e4e4;letter-spacing:-0.704px;">44%</div>
<div class="t" style="left:103.00px;top:663.98px;font-size:9.00px;color:#e4e4e4;letter-spacing:-0.104px;">0&#176;</div>
<div class="t" style="left:196.90px;top:663.98px;font-size:9.00px;color:#e4e4e4;">1</div>
<svg class="abs" style="left:84px;top:664.5px" width="8" height="7" viewBox="0 0 8 7"><path d="M1 1.8 L4 4.8 L7 1.8" fill="none" stroke="#dcdcdc" stroke-width="1"/></svg>
<svg class="abs" style="left:145.7px;top:664.5px" width="8" height="7" viewBox="0 0 8 7"><path d="M1 1.8 L4 4.8 L7 1.8" fill="none" stroke="#dcdcdc" stroke-width="1"/></svg>
<svg class="abs" style="left:229.7px;top:664.5px" width="8" height="7" viewBox="0 0 8 7"><path d="M1 1.8 L4 4.8 L7 1.8" fill="none" stroke="#dcdcdc" stroke-width="1"/></svg>
<svg class="abs" style="left:164px;top:663.5px" width="24" height="8" viewBox="0 0 24 8"><g fill="#787878"><rect x="1" y="0.8" width="1.2" height="6.4"/><path d="M7.6 0.8 V7.2 L2.6 4 Z"/><path d="M21.4 0.8 V7.2 L16.4 4 Z"/></g></svg>
<svg class="abs" style="left:247px;top:663.5px" width="24" height="8" viewBox="0 0 24 8"><g fill="#787878"><path d="M2.6 0.8 V7.2 L7.6 4 Z"/><path d="M16.4 0.8 V7.2 L21.4 4 Z"/><rect x="21.8" y="0.8" width="1.2" height="6.4"/></g></svg>
<div class="t" style="left:315.00px;top:663.90px;font-size:9.10px;color:#e4e4e4;letter-spacing:0.019px;">Toggle Direct Selection</div>
<svg class="abs" style="left:450px;top:662.8px" width="7" height="9" viewBox="0 0 7 9"><path d="M1.2 0.8 V8.2 L6 4.5 Z" fill="#e0e0e0"/></svg>
<svg class="abs" style="left:465px;top:663.3px" width="7" height="8" viewBox="0 0 7 8"><path d="M5 1 L2 4 L5 7" fill="none" stroke="#9a9a9a" stroke-width="1"/></svg>
<div class="abs" style="left:745px;top:661px;width:20px;height:12px;border-radius:6px;background:#525252"></div>
<!-- panel bottom -->
<div class="abs" style="left:750px;top:659.5px;width:297px;height:1.5px;background:#333"></div>
<div class="abs" style="left:751px;top:661px;width:295px;height:5px;background:#4b4b4b"></div>
<div class="abs" style="left:890px;top:661.5px;width:17px;height:3px;background:repeating-linear-gradient(90deg,#3a3a3a 0 1px,transparent 1px 2px)"></div>
<div class="abs" style="left:750px;top:666px;width:297px;height:1.5px;background:#333;border-radius:0 0 2px 2px"></div>
<div class="abs" style="left:751px;top:667.5px;width:296px;height:7px;background:#464646"></div>
<div class="abs" style="left:1032px;top:668.5px;width:13px;height:6px;background:#515151"></div>
<svg class="abs" style="left:1021px;top:665.5px" width="6" height="6" viewBox="0 0 6 6"><path d="M1 5 L5 1" stroke="#777" stroke-width="1"/></svg>

<div id="dock" class="abs"></div>
<div class="abs" style="left:1048px;top:56px;width:32px;height:10px;background:#444"></div>
<svg class="abs" style="left:1067.8px;top:58.5px" width="9" height="7" viewBox="0 0 9 7"><path d="M3.2 1.4 L1.2 3.5 L3.2 5.6 M6.4 1.4 L4.4 3.5 L6.4 5.6" fill="none" stroke="#c8c8c8" stroke-width="0.9"/></svg>
<div class="abs" style="left:1048px;top:66px;width:32px;height:1px;background:#3f3f3f"></div>
<div class="abs" style="left:1055px;top:70px;width:17px;height:3px;background:repeating-linear-gradient(90deg,#424242 0 1px,transparent 1px 2px)"></div>
<div class="abs" style="left:1051.8px;top:77.7px;width:23px;height:18px;border-radius:2px;background:#333"></div>
<svg class="abs" style="left:1056px;top:77.8px" width="17" height="17" viewBox="0 0 17 17"><path d="M1.5 1.4 H6 L6.8 4 H15.4 V15.8 H1.5 Z" fill="none" stroke="#c6c6c6" stroke-width="1"/><path d="M4.2 13.2 V8.4 H5.4 V6.4 H7.8 V8.4 H9.4 V6.4 H11.8 V8.4 H13 V13.2 Z" fill="#c2c2c2"/></svg>
<svg class="abs" style="left:1056px;top:101.6px" width="17" height="17" viewBox="0 0 17 17"><path d="M1.5 1.4 H6 L6.8 4 H15.4 V15.8 H1.5 Z" fill="none" stroke="#9c9c9c" stroke-width="1"/><path d="M4.2 13.2 V8.4 H5.4 V6.4 H7.8 V8.4 H9.4 V6.4 H11.8 V8.4 H13 V13.2 Z" fill="#a2a2a2"/></svg>
<div class="abs" style="left:1048px;top:124.5px;width:32px;height:1.5px;background:#3f3f3f"></div>
<div class="abs" style="left:1055px;top:128.5px;width:17px;height:3px;background:repeating-linear-gradient(90deg,#424242 0 1px,transparent 1px 2px)"></div>
<svg class="abs" style="left:1056px;top:137px" width="17" height="17" viewBox="0 0 17 17"><path d="M8.2 1.2 L15.4 6 L8.2 10.8 L1 6 Z" fill="#d2d2d2"/><path d="M2.8 9.6 L8.2 13.2 L13.6 9.6 L15.4 10.8 L8.2 15.6 L1 10.8 Z" fill="#d2d2d2"/></svg>
<div class="abs" style="left:1048px;top:158.5px;width:32px;height:1.5px;background:#3f3f3f"></div>

<div id="panel" class="abs"></div>
<div class="abs" style="left:751px;top:66px;width:295px;height:23px;background:#424242"></div>
<div class="abs" style="left:751px;top:66px;width:77.2px;height:23px;background:#535353"></div>
<div class="abs" style="left:914px;top:66px;width:1px;height:23px;background:#3a3a3a"></div>
<div class="t" style="left:758.70px;top:72.97px;font-size:8.90px;color:#f4f4f4;letter-spacing:0.075px;font-weight:bold;">Datylon Editor</div>
<div class="t" style="left:835.50px;top:72.97px;font-size:8.90px;color:#bdbdbd;letter-spacing:0.051px;font-weight:bold;">Datylon Account</div>
<svg class="abs" style="left:1032px;top:74px" width="9" height="7" viewBox="0 0 9 7"><path d="M1 1.2 L3.2 3.5 L1 5.8 M4.6 1.2 L6.8 3.5 L4.6 5.8" fill="none" stroke="#c4c4c4" stroke-width="0.9"/></svg>
<!-- left strip -->
<div class="abs" style="left:751px;top:89px;width:9.5px;height:570.5px;background:#f8f8f8;border-right:1px solid #e6e6e6"></div>
<svg class="abs" style="left:752px;top:370px" width="6" height="9" viewBox="0 0 6 9"><path d="M1.4 1.4 L4.4 4.4 L1.4 7.4" fill="none" stroke="#333" stroke-width="1"/></svg>
<!-- element row -->
<svg class="abs" style="left:772px;top:103px" width="14" height="13" viewBox="0 0 14 13"><path d="M1.1 0 V11.4 H12.8" fill="none" stroke="#9db4ff" stroke-width="1.2"/><rect x="3.5" y="8.2" width="1.5" height="1.5" fill="#3a64ff"/><rect x="4.8" y="6.5" width="1.5" height="1.5" fill="#3a64ff"/><rect x="5.7" y="3.8" width="1.5" height="1.5" fill="#3a64ff"/><rect x="7.4" y="2.0" width="1.5" height="1.5" fill="#3a64ff"/><rect x="9.8" y="1.6" width="1.5" height="1.5" fill="#3a64ff"/><rect x="3.6" y="3.4" width="1.3" height="1.3" fill="#bccaff"/><rect x="6.8" y="6.6" width="1.3" height="1.3" fill="#bccaff"/><rect x="7.8" y="4.8" width="1.3" height="1.3" fill="#bccaff"/><rect x="10.2" y="3.9" width="1.3" height="1.3" fill="#bccaff"/></svg>
<div class="t" style="left:792.50px;top:103.85px;font-size:10.10px;color:#111;letter-spacing:-0.528px;font-weight:bold;">Element_1</div>
<div class="abs" style="left:922px;top:100.5px;width:68.5px;height:16.5px;border-radius:3.5px;background:#efefef"></div>
<div class="t" style="left:929.80px;top:103.79px;font-size:9.70px;color:#1a1a1a;letter-spacing:0.199px;">Select chart</div>
<div class="abs" style="left:997.4px;top:100.5px;width:36px;height:16.5px;border-radius:3.5px;background:#efefef"></div>
<div class="t" style="left:1005.70px;top:103.79px;font-size:9.70px;color:#1a1a1a;letter-spacing:0.049px;">Help</div>
<div class="abs" style="left:760px;top:127px;width:286px;height:1px;background:#dcdcdc"></div>
<!-- tabs -->
<div class="abs" style="left:951px;top:128px;width:95px;height:30px;background:#eef3fe;border-bottom:1.5px solid #2a62f6"></div>
<div class="t" style="left:791.70px;top:138.69px;font-size:9.70px;color:#222;letter-spacing:-0.010px;">Binding</div>
<div class="t" style="left:879.50px;top:138.69px;font-size:9.70px;color:#222;letter-spacing:0.116px;">Formatting</div>
<div class="t" style="left:983.50px;top:138.89px;font-size:9.70px;color:#1f55f2;letter-spacing:-0.390px;font-weight:bold;">Styling</div>
<div class="abs" style="left:760px;top:157.5px;width:191px;height:1px;background:#e2e2e2"></div>
<!-- data marks -->
<svg class="abs" style="left:768px;top:168.5px" width="10" height="12" viewBox="0 0 10 12"><path d="M8.4 1.9 L3.5 6 L8.4 10.1" fill="none" stroke="#111" stroke-width="1.5"/></svg>
<div class="t" style="left:875.70px;top:167.93px;font-size:10.60px;color:#1a1a1a;letter-spacing:0.124px;">Data Marks</div>
<svg class="abs" style="left:1017px;top:168px" width="13" height="10" viewBox="0 0 13 10"><path d="M0.8 5 C3 0.6 10 0.6 12.2 5 C10 9.4 3 9.4 0.8 5Z" fill="none" stroke="#333" stroke-width="0.9"/><circle cx="6.5" cy="5" r="2.5" fill="none" stroke="#333" stroke-width="0.9"/><circle cx="6.5" cy="5" r="1" fill="#333"/></svg>
<div class="abs" style="left:760px;top:187px;width:286px;height:1px;background:#dcdcdc"></div>
<!-- X axis orientation -->
<div class="t" style="left:770.60px;top:196.89px;font-size:9.70px;color:#1f1f1f;letter-spacing:0.006px;">X Axis Orientation</div>
<div class="abs" style="left:863.2px;top:195px;width:75.6px;height:16.6px;border-radius:3px;background:#f0f0f0;border:1px solid #8c8c8c"></div>
<svg class="abs" style="left:894.2px;top:199.2px" width="14" height="8" viewBox="0 0 14 8"><path d="M1.2 4 H12.8 M3.6 1.6 L1.2 4 L3.6 6.4 M10.4 1.6 L12.8 4 L10.4 6.4" fill="none" stroke="#111" stroke-width="0.9"/></svg>
<div class="abs" style="left:943px;top:195px;width:76.2px;height:16.6px;border-radius:3px;background:#efefef"></div>
<svg class="abs" style="left:977.4px;top:196.3px" width="8" height="14" viewBox="0 0 8 14"><path d="M4 1.2 V12.8 M1.6 3.6 L4 1.2 L6.4 3.6 M1.6 10.4 L4 12.8 L6.4 10.4" fill="none" stroke="#111" stroke-width="0.9"/></svg>
<!-- Max size -->
<div class="t" style="left:770.60px;top:220.39px;font-size:9.70px;color:#1f1f1f;letter-spacing:-0.184px;">Max Size</div>
<div class="q" style="left:844.5px;top:221.8px">?</div>
<div class="inp" style="left:863.2px;top:218.2px;width:72.8px;height:17.2px"></div><div class="t" style="left:867.40px;top:222.79px;font-size:9.70px;color:#1f1f1f;letter-spacing:0.196px;">50.0px</div>
<div class="inp" style="left:964.2px;top:218.2px;width:71.8px;height:17.2px"></div><div class="t" style="left:968.50px;top:222.79px;font-size:9.70px;color:#1f1f1f;letter-spacing:0.196px;">50.0px</div>
<svg class="abs lk" style="left:944.5px;top:221.5px" width="11" height="11" viewBox="0 0 11 11"><g fill="none" stroke="#333" stroke-width="0.9"><rect x="0.2" y="3.6" width="6.6" height="3.6" rx="1.8" transform="rotate(-45 3.5 5.4) translate(-0.6 1.6)"/><rect x="4.2" y="3.6" width="6.6" height="3.6" rx="1.8" transform="rotate(-45 7.5 5.4) translate(0.6 -1.6)"/></g></svg>
<div class="t" style="left:887.25px;top:239.24px;font-size:9.40px;color:#1f1f1f;letter-spacing:0.018px;">Width</div>
<div class="t" style="left:986.65px;top:239.24px;font-size:9.40px;color:#1f1f1f;letter-spacing:-0.055px;">Height</div>
<!-- max value -->
<div class="t" style="left:770.60px;top:258.49px;font-size:9.70px;color:#1f1f1f;letter-spacing:-0.038px;">Max Value</div>
<div class="q" style="left:844.5px;top:259.6px">?</div>
<div class="inp" style="left:863.4px;top:256.4px;width:172.8px;height:16.4px"></div>
<div class="t" style="left:770.60px;top:281.99px;font-size:9.70px;color:#1f1f1f;letter-spacing:0.023px;">Min Value</div>
<div class="q" style="left:844.5px;top:283.2px">?</div>
<div class="inp" style="left:863.4px;top:280.3px;width:172.8px;height:16.4px"></div>
<!-- checkboxes -->
<div class="t" style="left:770.60px;top:305.59px;font-size:9.70px;color:#1f1f1f;letter-spacing:-0.015px;">Use Absolute</div>
<div class="t" style="left:770.60px;top:316.49px;font-size:9.70px;color:#1f1f1f;letter-spacing:-0.027px;">Values</div>
<div class="abs cb" style="left:863.4px;top:310.2px"></div>
<svg class="abs" style="left:863.4px;top:310.2px" width="11" height="11" viewBox="0 0 11 11"><path d="M2.6 5.6 L4.7 7.6 L8.4 3.4" fill="none" stroke="#fff" stroke-width="1.4"/></svg>
<div class="t" style="left:770.60px;top:335.79px;font-size:9.70px;color:#1f1f1f;letter-spacing:-0.068px;">Small Marks On</div>
<div class="t" style="left:770.60px;top:346.59px;font-size:9.70px;color:#1f1f1f;letter-spacing:0.132px;">Top</div>
<div class="abs cb" style="left:863.4px;top:340.6px"></div>
<svg class="abs" style="left:863.4px;top:340.6px" width="11" height="11" viewBox="0 0 11 11"><path d="M2.6 5.6 L4.7 7.6 L8.4 3.4" fill="none" stroke="#fff" stroke-width="1.4"/></svg>
<!-- SYMBOL -->
<div class="abs" style="left:760px;top:364px;width:286px;height:26px;background:#f6f6f6;border-top:1px solid #e6e6e6;border-bottom:1px solid #e6e6e6"></div>
<div class="t" style="left:770.60px;top:373.42px;font-size:7.30px;color:#222;letter-spacing:-0.246px;font-weight:bold;">SYMBOL</div>
<div class="t" style="left:770.90px;top:398.39px;font-size:9.70px;color:#1f1f1f;letter-spacing:-0.078px;">Icon</div>
<div class="q" style="left:844.5px;top:399.8px">?</div>
<div class="abs" style="left:863.4px;top:396.5px;width:172.8px;height:16.5px;border-radius:3px;background:#efefef"></div>
<div class="t" style="left:867.40px;top:400.90px;font-size:9.80px;color:#111;letter-spacing:0.063px;">Circle Solid (1:1)</div>
<svg class="abs" style="left:1023.5px;top:402.5px" width="7" height="5" viewBox="0 0 7 5"><path d="M0.6 0.5 H6.4 L3.5 4.5Z" fill="#111"/></svg>
<div class="t" style="left:770.60px;top:422.19px;font-size:9.70px;color:#1f1f1f;letter-spacing:-0.071px;">Color</div>
<div class="q" style="left:844.5px;top:423.6px">?</div>
<div class="abs" style="left:863.2px;top:420.3px;width:33.5px;height:16.4px;border-radius:3.5px;border:1px solid #c6c6c6;background:#fff"></div>
<div class="abs" style="left:865.3px;top:422.3px;width:29.4px;height:12.5px;border-radius:2.5px;background:linear-gradient(90deg,#c9636a 0%,#e39a8c 22%,#f7e6e0 48%,#dfeaf3 55%,#8bbbe0 80%,#4a84c4 100%)"></div>
<!-- Stroke -->
<div class="t" style="left:770.60px;top:445.59px;font-size:9.70px;color:#1f1f1f;letter-spacing:-0.147px;">Stroke</div>
<div class="q" style="left:844.5px;top:447.0px">?</div>
<div class="abs" style="left:863.2px;top:443.8px;width:33.5px;height:16.6px;border-radius:3.5px;border:1px solid #c6c6c6;background:#fff"></div>
<div class="abs" style="left:865.3px;top:445.9px;width:29.4px;height:12.6px;border-radius:2.5px;background:#333"></div>
<div class="inp" style="left:905.4px;top:443.7px;width:105.2px;height:16.8px"></div><div class="t" style="left:909.80px;top:448.29px;font-size:9.70px;color:#1f1f1f;letter-spacing:0.182px;">0.2pt</div>
<div class="abs" style="left:1015.4px;top:444.4px;width:24.8px;height:16px;border-radius:3px;background:#efefef"></div>
<svg class="abs gear" style="left:1022.3px;top:446.4px" width="10.4" height="10.4" viewBox="0 0 12 12"><g fill="none" stroke="#333" stroke-width="0.9"><circle cx="6" cy="6" r="1.9"/><path d="M5 1 H7 L7.4 2.5 L8.6 3.2 L10 2.7 L11 4.4 L9.9 5.4 V6.6 L11 7.6 L10 9.3 L8.6 8.8 L7.4 9.5 L7 11 H5 L4.6 9.5 L3.4 8.8 L2 9.3 L1 7.6 L2.1 6.6 V5.4 L1 4.4 L2 2.7 L3.4 3.2 L4.6 2.5 Z"/></g></svg>
<div class="t" style="left:869.15px;top:464.74px;font-size:9.40px;color:#1f1f1f;letter-spacing:-0.192px;">Color</div>
<div class="t" style="left:944.10px;top:464.74px;font-size:9.40px;color:#1f1f1f;letter-spacing:-0.217px;">Weight</div>
<!-- Size -->
<div class="t" style="left:770.60px;top:489.69px;font-size:9.70px;color:#1f1f1f;letter-spacing:-0.355px;">Size</div>
<div class="q" style="left:844.5px;top:491.1px">?</div>
<div class="inp" style="left:863.2px;top:487.3px;width:72.8px;height:17.2px"></div><div class="t" style="left:867.40px;top:491.99px;font-size:9.70px;color:#1f1f1f;letter-spacing:0.196px;">20.0px</div>
<div class="inp" style="left:964.2px;top:487.3px;width:71.8px;height:17.2px"></div><div class="t" style="left:968.50px;top:491.99px;font-size:9.70px;color:#1f1f1f;letter-spacing:0.196px;">20.0px</div>
<svg class="abs lk" style="left:944.5px;top:490.5px" width="11" height="11" viewBox="0 0 11 11"><g fill="none" stroke="#333" stroke-width="0.9"><rect x="0.2" y="3.6" width="6.6" height="3.6" rx="1.8" transform="rotate(-45 3.5 5.4) translate(-0.6 1.6)"/><rect x="4.2" y="3.6" width="6.6" height="3.6" rx="1.8" transform="rotate(-45 7.5 5.4) translate(0.6 -1.6)"/></g></svg>
<div class="t" style="left:887.25px;top:508.14px;font-size:9.40px;color:#1f1f1f;letter-spacing:0.018px;">Width</div>
<div class="t" style="left:986.65px;top:508.14px;font-size:9.40px;color:#1f1f1f;letter-spacing:-0.055px;">Height</div>
<!-- CONNECTOR -->
<div class="abs" style="left:760px;top:525px;width:286px;height:26px;background:#f6f6f6;border-top:1px solid #e6e6e6;border-bottom:1px solid #e6e6e6"></div>
<div class="t" style="left:770.60px;top:534.72px;font-size:7.30px;color:#222;letter-spacing:-0.314px;font-weight:bold;">CONNECTOR</div>
<svg class="abs" style="left:1015.5px;top:532.5px" width="14" height="11" viewBox="0 0 14 11"><path d="M1 5.5 C3.2 1.2 10.8 1.2 13 5.5 C10.8 9.8 3.2 9.8 1 5.5Z" fill="none" stroke="#333" stroke-width="0.9"/><circle cx="7" cy="5.5" r="2.4" fill="none" stroke="#333" stroke-width="0.9"/><path d="M2.2 0.8 L12 10.4" stroke="#333" stroke-width="1"/></svg>
<div class="t" style="left:770.60px;top:556.89px;font-size:9.70px;color:#9e9e9e;letter-spacing:-0.147px;">Stroke</div>
<div class="abs" style="left:863.2px;top:555.3px;width:33.5px;height:16.3px;border-radius:3.5px;border:1px solid #d2d2d2;background:#fff"></div>
<div class="abs" style="left:865.3px;top:557.2px;width:29.4px;height:12.5px;border-radius:2.5px;background:#b1b1b1"></div>
<div class="inp" style="left:905.4px;top:555.3px;width:105.2px;height:16.4px;border-color:#d9d9d9"></div><div class="t" style="left:910.70px;top:559.79px;font-size:9.70px;color:#8e8e8e;letter-spacing:-0.043px;">1.0pt</div>
<div class="abs" style="left:1015.4px;top:555.6px;width:24.8px;height:16px;border-radius:3px;background:#f3f3f3"></div>
<svg class="abs gear" style="left:1022.3px;top:557.5px" width="10.4" height="10.4" viewBox="0 0 12 12"><g fill="none" stroke="#8a8a8a" stroke-width="0.9"><circle cx="6" cy="6" r="1.9"/><path d="M5 1 H7 L7.4 2.5 L8.6 3.2 L10 2.7 L11 4.4 L9.9 5.4 V6.6 L11 7.6 L10 9.3 L8.6 8.8 L7.4 9.5 L7 11 H5 L4.6 9.5 L3.4 8.8 L2 9.3 L1 7.6 L2.1 6.6 V5.4 L1 4.4 L2 2.7 L3.4 3.2 L4.6 2.5 Z"/></g></svg>
<div class="t" style="left:869.15px;top:576.24px;font-size:9.40px;color:#a2a2a2;letter-spacing:-0.192px;">Color</div>
<div class="t" style="left:944.10px;top:576.24px;font-size:9.40px;color:#a2a2a2;letter-spacing:-0.217px;">Weight</div>
<!-- corner -->
<div class="abs" style="left:1034px;top:647px;width:12px;height:12.5px;background:#5a5a5a"></div>

</div>
</body>
</html>
